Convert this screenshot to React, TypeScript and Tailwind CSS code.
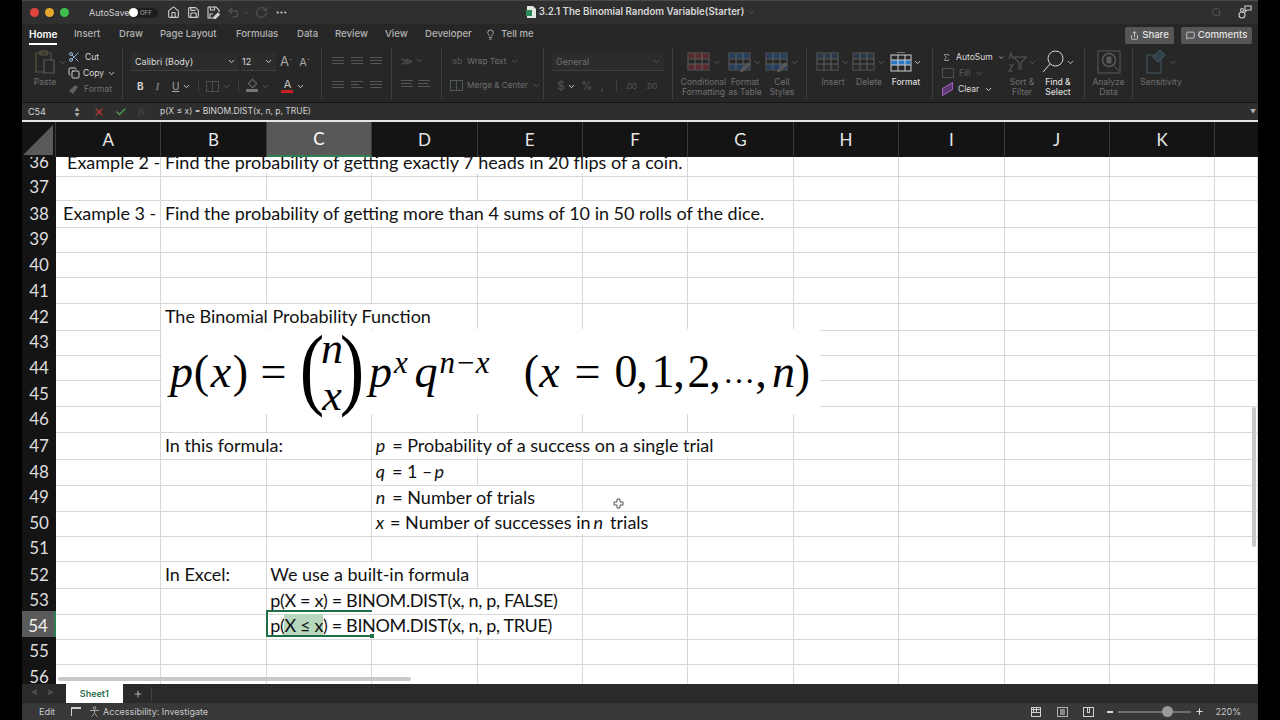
import type { ReactNode } from "react";
import {
  Check,
  ChevronDown,
  Copy,
  Home,
  Lightbulb,
  MessageSquare,
  MoreHorizontal,
  Plus,
  RotateCw,
  Save,
  Scissors,
  Search,
  Share,
  Sigma,
  Undo2,
  X,
} from "lucide-react";

const spanClass: Record<number, string> = {
  1: "col-span-1",
  2: "col-span-2",
  3: "col-span-3",
  4: "col-span-4",
  5: "col-span-5",
  6: "col-span-6",
};

type Cell = { col: number; span: number; body: ReactNode; indent?: string };

const columns = ["A", "B", "C", "D", "E", "F", "G", "H", "I", "J", "K"];

const sheetRows: { n: number; cells: Cell[] }[] = [
  {
    n: 36,
    cells: [
      { col: 0, span: 1, body: "Example 2 -", indent: "pl-[11px]" },
      { col: 1, span: 5, body: "Find the probability of getting exactly 7 heads in 20 flips of a coin." },
    ],
  },
  { n: 37, cells: [] },
  {
    n: 38,
    cells: [
      { col: 0, span: 1, body: "Example 3 -", indent: "pl-[7px]" },
      { col: 1, span: 6, body: "Find the probability of getting more than 4 sums of 10 in 50 rolls of the dice." },
    ],
  },
  { n: 39, cells: [] },
  { n: 40, cells: [] },
  { n: 41, cells: [] },
  { n: 42, cells: [{ col: 1, span: 3, body: "The Binomial Probability Function" }] },
  { n: 43, cells: [] },
  { n: 44, cells: [] },
  { n: 45, cells: [] },
  { n: 46, cells: [] },
  {
    n: 47,
    cells: [
      { col: 1, span: 2, body: "In this formula:" },
      { col: 3, span: 4, body: <><i className="mr-[7px]">p</i>= Probability of a success on a single trial</> },
    ],
  },
  { n: 48, cells: [{ col: 3, span: 1, body: <><i className="mr-[7px]">q</i>= 1 – <i className="ml-[2px]">p</i></> }] },
  { n: 49, cells: [{ col: 3, span: 2, body: <><i className="mr-[7px]">n</i>= Number of trials</> }] },
  {
    n: 50,
    cells: [
      {
        col: 3,
        span: 3,
        body: <><i className="mr-[6px]">x</i>= Number of successes in <i className="mr-[7px] ml-[3px]">n</i> trials</>,
      },
    ],
  },
  { n: 51, cells: [] },
  {
    n: 52,
    cells: [
      { col: 1, span: 1, body: "In Excel:" },
      { col: 2, span: 2, body: "We use a built-in formula" },
    ],
  },
  { n: 53, cells: [{ col: 2, span: 3, body: <span className="tracking-[-0.35px]">p(X = x) = BINOM.DIST(x, n, p, FALSE)</span> }] },
  {
    n: 54,
    cells: [
      {
        col: 2,
        span: 3,
        body: (
          <span className="tracking-[-0.35px]">
            p(<span className="inline-block bg-[#b6d7bd] leading-[23px]">X ≤ x</span>) = BINOM.DIST(x, n, p, TRUE)
          </span>
        ),
      },
    ],
  },
  { n: 55, cells: [] },
  { n: 56, cells: [] },
];

function Chev({ dim = false }: { dim?: boolean }) {
  return <ChevronDown size={9} strokeWidth={2.4} className={dim ? "text-[#5c5c5c]" : "text-[#d8d8d8]"} />;
}

function SheetRow({ n, cells }: { n: number; cells: Cell[] }) {
  const out: ReactNode[] = [];
  let col = 0;
  while (col < 12) {
    const cell = cells.find((c) => c.col === col);
    if (cell) {
      out.push(
        <div
          key={col}
          className={`${spanClass[cell.span]} relative flex items-center whitespace-nowrap border-r border-b border-[#d8d8d8] pt-[1px] ${cell.indent ?? "pl-[3.5px]"}`}
        >
          {cell.body}
          {n === 54 && (
            <div className="absolute top-[-1px] left-[-1px] h-[27px] w-[106.5px] border-2 border-r-0 border-[#1f6e46]">
              <div className="absolute right-[-2px] bottom-[-3px] h-[4px] w-[4px] bg-[#1f6e46]" />
            </div>
          )}
        </div>
      );
      col += cell.span;
    } else {
      out.push(<div key={col} className="border-r border-b border-[#d8d8d8]" />);
      col += 1;
    }
  }
  return (
    <div className="grid h-[25.78px] shrink-0 grid-cols-[34px_repeat(11,105.4px)_1fr]">
      <div
        className={`flex items-center justify-center border-b border-[#3a3a3a] pt-[1px] text-[17px] ${n === 54 ? "border-r-2 border-r-[#2f7d55] bg-[#5a5a5a] text-[#f2f2f2]" : "bg-[#141414] text-[#dedede]"}`}
      >
        {n}
      </div>
      {out}
    </div>
  );
}

function Glyph({ w, children }: { w: string; children: ReactNode }) {
  return <span className={`flex ${w} shrink-0 justify-center`}>{children}</span>;
}

function Formula() {
  return (
    <div className="absolute top-[172px] left-[140px] flex h-[85px] w-[658px] items-center whitespace-nowrap bg-white pl-[6px] font-['Liberation_Serif',serif] text-[46px] leading-none text-black">
      <Glyph w="w-[27px]"><i>p</i></Glyph>
      <Glyph w="w-[13px]">(</Glyph>
      <Glyph w="w-[26px]"><i>x</i></Glyph>
      <Glyph w="w-[13px]">)</Glyph>
      <Glyph w="w-[25px] ml-[14px]">=</Glyph>
      <span className="ml-[16px] flex w-[20px] shrink-0 -translate-y-[5px] scale-x-[0.8] justify-center text-[92px] font-light">(</span>
      <div className="flex w-[20px] shrink-0 flex-col items-center gap-[14px] text-[44px] italic leading-[33px]">
        <span>n</span>
        <span>x</span>
      </div>
      <span className="flex w-[20px] shrink-0 -translate-y-[5px] scale-x-[0.8] justify-center text-[92px] font-light">)</span>
      <Glyph w="w-[25px] ml-[6px]"><i>p</i></Glyph>
      <Glyph w="w-[16px] mb-[18px] text-[31px]"><i>x</i></Glyph>
      <Glyph w="w-[22px] ml-[6px]"><i>q</i></Glyph>
      <Glyph w="w-[55px] mb-[18px] text-[31px]"><i>n−x</i></Glyph>
      <Glyph w="w-[13px] ml-[33px]">(</Glyph>
      <Glyph w="w-[23px]"><i>x</i></Glyph>
      <Glyph w="w-[27px] ml-[13px]">=</Glyph>
      <Glyph w="w-[22px] ml-[14px]">0</Glyph>
      <Glyph w="w-[10px]">,</Glyph>
      <Glyph w="w-[22px] ml-[5px]">1</Glyph>
      <Glyph w="w-[10px]">,</Glyph>
      <Glyph w="w-[22px] ml-[4px]">2</Glyph>
      <Glyph w="w-[10px]">,</Glyph>
      <Glyph w="w-[30px] ml-[4px] text-[32px]">…</Glyph>
      <Glyph w="w-[10px] ml-[2px]">,</Glyph>
      <Glyph w="w-[25px] ml-[5px]"><i>n</i></Glyph>
      <Glyph w="w-[13px]">)</Glyph>
    </div>
  );
}

function Sep() {
  return <div className="my-[3px] w-px shrink-0 bg-[#3d3d3d]" />;
}

function BigButton({ w, icon, label, dim = true }: { w: string; icon: ReactNode; label: ReactNode; dim?: boolean }) {
  return (
    <div className={`flex ${w} shrink-0 flex-col items-center`}>
      <div className="flex h-[28px] items-center gap-[1px]">{icon}</div>
      <div className={`mt-[2px] text-center text-[8.5px] leading-[9.5px] ${dim ? "text-[#707070]" : "font-medium text-[#dcdcdc]"}`}>
        {label}
      </div>
    </div>
  );
}

function GridIcon({ top, bottom, slant = false }: { top: string; bottom: string; slant?: boolean }) {
  return (
    <svg width="24" height="20" viewBox="0 0 24 20" fill="none" stroke="#5e5e5e" strokeWidth="1">
      <rect x="1" y="1" width="21" height="17" />
      <rect x="1.5" y="1.5" width="20" height="5" fill={top} stroke="none" />
      <rect x="1.5" y="12" width="20" height="5.5" fill={bottom} stroke="none" />
      <path d="M1 7h21M1 12h21M8 1v17M15 1v17" />
      {slant && <path d="M12 19l8-8 2 2-8 7z" fill="#555" />}
    </svg>
  );
}

function AlignLines({ w }: { w: number }) {
  return (
    <div className="flex flex-col gap-[2px]">
      <div className="h-px w-[12px] bg-[#565656]" />
      <div className="h-px bg-[#565656]" style={{ width: w }} />
      <div className="h-px w-[12px] bg-[#565656]" />
    </div>
  );
}

function Ribbon() {
  return (
    <div className="flex h-[57px] shrink-0 bg-[#272727] text-[8.5px] text-[#dcdcdc]">
      {/* clipboard */}
      <div className="flex w-[100px] shrink-0 pl-[10px]">
        <BigButton
          w="w-[26px] pt-[3px]"
          label="Paste"
          icon={
            <svg width="24" height="26" viewBox="0 0 24 26" fill="none" stroke="#5d5442" strokeWidth="1.2">
              <path d="M3 4h15v19H3z" />
              <path d="M7 2h7v4H7z" />
              <path d="M11 11h10v13H11z" fill="#272727" stroke="#5a5a5a" />
            </svg>
          }
        />
        <div className="pt-[13px]">
          <Chev dim />
        </div>
        <div className="ml-[1px] flex flex-col gap-[4px] pt-[6px]">
          <div className="flex h-[12px] items-center gap-[5px]">
            <Scissors size={12} className="text-[#8fb4dc]" />
            <span>Cut</span>
          </div>
          <div className="flex h-[12px] items-center gap-[3px]">
            <Copy size={12} className="text-[#cfcfcf]" />
            <span>Copy</span>
            <Chev />
          </div>
          <div className="flex h-[12px] items-center gap-[4px] text-[#707070]">
            <svg width="12" height="12" viewBox="0 0 12 12" fill="#5e5e5e">
              <path d="M1 8l6-6 3 2-5 7z" />
            </svg>
            <span>Format</span>
          </div>
        </div>
      </div>
      <Sep />
      {/* font */}
      <div className="flex w-[198px] shrink-0 flex-col pt-[8px] pl-[8px]">
        <div className="flex h-[18px] items-center">
          <div className="flex h-[18px] w-[108px] items-center justify-between border-b border-[#3e3e3e] bg-[#2c2c2c] pr-[3px] pl-[4px] text-[9px]">
            <span>Calibri (Body)</span>
            <Chev />
          </div>
          <div className="ml-[2px] flex h-[18px] w-[35px] items-center justify-between border-b border-[#3e3e3e] bg-[#2c2c2c] pr-[3px] pl-[1px] text-[9px]">
            <span>12</span>
            <Chev />
          </div>
          <span className="ml-[4px] text-[13px] text-[#a8a8a8]">A</span>
          <span className="text-[8px] text-[#8a8a8a]">ˆ</span>
          <span className="ml-[7px] text-[11px] text-[#a8a8a8]">A</span>
          <span className="text-[8px] text-[#8a8a8a]">ˇ</span>
        </div>
        <div className="mt-[6px] flex h-[18px] items-center text-[10px]">
          <span className="ml-[6px] font-bold text-[#cfcfcf]">B</span>
          <span className="ml-[12px] font-['Liberation_Serif',serif] text-[#a0a0a0] italic">I</span>
          <span className="ml-[13px] text-[#a8a8a8] underline">U</span>
          <span className="ml-[3px]">
            <Chev />
          </span>
          <div className="mx-[7px] h-[12px] w-px bg-[#3d3d3d]" />
          <div className="grid h-[11px] w-[13px] grid-cols-2 border border-[#4d4d4d]">
            <div className="border-r border-[#4d4d4d]" />
          </div>
          <span className="ml-[3px]">
            <Chev dim />
          </span>
          <div className="mx-[7px] h-[12px] w-px bg-[#3d3d3d]" />
          <div className="flex w-[12px] flex-col items-center">
            <div className="h-[7px] w-[7px] rotate-45 border border-[#6a6a6a]" />
            <div className="mt-[2px] h-[3px] w-[12px] bg-[#777]" />
          </div>
          <span className="ml-[3px]">
            <Chev dim />
          </span>
          <div className="ml-[11px] flex w-[12px] flex-col items-center text-[11px] leading-[10px] text-[#c8c8c8]">
            A<div className="mt-[1px] h-[3px] w-[12px] bg-[#c81e28]" />
          </div>
          <span className="ml-[3px]">
            <Chev />
          </span>
        </div>
      </div>
      <Sep />
      {/* alignment */}
      <div className="flex w-[69px] shrink-0 flex-col gap-[17px] pt-[12px] pl-[10px]">
        <div className="flex items-center gap-[7px]">
          <AlignLines w={12} />
          <AlignLines w={12} />
          <AlignLines w={12} />
        </div>
        <div className="flex items-center gap-[7px]">
          <AlignLines w={12} />
          <AlignLines w={8} />
          <AlignLines w={12} />
        </div>
      </div>
      <Sep />
      <div className="flex w-[49px] shrink-0 flex-col gap-[15px] pt-[11px] pl-[9px]">
        <div className="flex h-[9px] items-center gap-[2px]">
          <span className="text-[11px] leading-[10px] text-[#555]">≫</span>
          <Chev dim />
        </div>
        <div className="flex items-center gap-[5px]">
          <AlignLines w={10} />
          <AlignLines w={10} />
        </div>
      </div>
      <Sep />
      {/* wrap / merge */}
      <div className="flex w-[101px] shrink-0 flex-col gap-[10px] pt-[9px] pl-[8px] text-[8.2px] whitespace-nowrap text-[#707070]">
        <div className="flex h-[14px] items-center gap-[4px]">
          <span className="w-[13px] pl-[2px] text-[9px] text-[#555]">ab</span>
          <span>Wrap Text</span>
          <Chev dim />
        </div>
        <div className="flex h-[14px] items-center gap-[4px]">
          <div className="grid h-[11px] w-[13px] grid-cols-2 border border-[#4d5a52]">
            <div className="border-r border-[#4d5a52]" />
          </div>
          <span>Merge &amp; Center</span>
          <Chev dim />
        </div>
      </div>
      <Sep />
      {/* number */}
      <div className="flex w-[128px] shrink-0 flex-col pt-[8px] pl-[8px] text-[#707070]">
        <div className="flex h-[18px] w-[112px] items-center justify-between border-b border-[#3e3e3e] bg-[#2c2c2c] pr-[3px] pl-[4px] text-[9px]">
          <span>General</span>
          <Chev dim />
        </div>
        <div className="mt-[6px] flex h-[18px] items-center pl-[5px] text-[12px] text-[#565656]">
          <span>$</span>
          <span className="ml-[2px]">
            <Chev />
          </span>
          <span className="ml-[5px]">%</span>
          <span className="ml-[8px]">,</span>
          <div className="mr-[8px] ml-[12px] h-[12px] w-px bg-[#3d3d3d]" />
          <span className="text-[8px]">.00</span>
          <span className="ml-[8px] text-[8px]">.00</span>
        </div>
      </div>
      <Sep />
      {/* styles */}
      <div className="flex w-[133px] shrink-0 pt-[3px] pl-[7px]">
        <BigButton w="w-[47px]" label={<>Conditional<br />Formatting</>} icon={<><GridIcon top="#5a2a2e" bottom="#5a2a2e" /><Chev dim /></>} />
        <BigButton w="w-[36px]" label={<>Format<br />as Table</>} icon={<><GridIcon top="#273f5e" bottom="#273f5e" slant /><Chev dim /></>} />
        <BigButton w="w-[38px]" label={<>Cell<br />Styles</>} icon={<><GridIcon top="#273f5e" bottom="#273f5e" slant /><Chev dim /></>} />
      </div>
      <Sep />
      {/* cells */}
      <div className="flex w-[125px] shrink-0 pt-[3px] pl-[8px]">
        <BigButton w="w-[36px]" label="Insert" icon={<><GridIcon top="#2b3a4a" bottom="#2b2b2b" /><Chev dim /></>} />
        <BigButton w="w-[36px]" label="Delete" icon={<><GridIcon top="#2b3a4a" bottom="#2b2b2b" /><Chev dim /></>} />
        <BigButton
          w="w-[38px]"
          dim={false}
          label="Format"
          icon={
            <>
              <svg width="22" height="22" viewBox="0 0 22 22" fill="none" stroke="#d0d0d0" strokeWidth="1">
                <rect x="1" y="4" width="20" height="16" />
                <rect x="1.5" y="9" width="19" height="5" fill="#2a78c4" stroke="none" />
                <path d="M1 9h20M1 14h20M8 4v16M15 4v16" />
                <path d="M7 1.5h8" stroke="#777" />
              </svg>
              <Chev />
            </>
          }
        />
      </div>
      <Sep />
      {/* editing */}
      <div className="flex w-[151px] shrink-0 pl-[9px]">
        <div className="flex w-[62px] shrink-0 flex-col gap-[4px] pt-[6px]">
          <div className="flex h-[12px] items-center gap-[5px]">
            <Sigma size={13} className="text-[#b5b5b5]" />
            <span>AutoSum</span>
            <Chev />
          </div>
          <div className="flex h-[12px] items-center gap-[5px] text-[#606060]">
            <div className="h-[10px] w-[12px] border border-[#505050]" />
            <span>Fill</span>
            <Chev dim />
          </div>
          <div className="flex h-[12px] items-center gap-[5px]">
            <div className="h-[8px] w-[11px] -skew-y-[30deg] border border-[#a35fc2] bg-[#5e3a70]" />
            <span>Clear</span>
            <Chev />
          </div>
        </div>
        <div className="flex pt-[3px]">
          <BigButton
            w="w-[36px]"
            label={<>Sort &amp;<br />Filter</>}
            icon={
              <>
                <svg width="20" height="22" viewBox="0 0 20 22" fill="none" stroke="#555" strokeWidth="1.1">
                  <path d="M7 6h12l-5 6v6h-2v-6z" />
                  <path d="M2 8l2-6 2 6M2 14h4l-4 6h4" />
                </svg>
                <Chev dim />
              </>
            }
          />
          <BigButton
            w="w-[36px]"
            dim={false}
            label={<>Find &amp;<br />Select</>}
            icon={
              <>
                <svg width="24" height="26" viewBox="0 0 24 26" fill="none" stroke="#dcdcdc" strokeWidth="1">
                  <circle cx="14.5" cy="9.5" r="7.5" />
                  <path d="M9 15L2 23" />
                </svg>
                <Chev />
              </>
            }
          />
        </div>
      </div>
      <Sep />
      <div className="flex w-[47px] shrink-0 justify-center pt-[3px]">
        <BigButton
          w="w-[46px]"
          label={<>Analyze<br />Data</>}
          icon={
            <svg width="26" height="26" viewBox="0 0 26 26" fill="none" stroke="#5a5a5a" strokeWidth="1">
              <rect x="2" y="2" width="22" height="22" />
              <circle cx="13" cy="11" r="6.5" strokeWidth="1.5" />
              <path d="M11 8h4v6h-4zM17 16l6 6" fill="#5a5a5a" />
            </svg>
          }
        />
      </div>
      <Sep />
      <div className="flex w-[56px] shrink-0 justify-center pt-[3px]">
        <BigButton
          w="w-[56px]"
          label="Sensitivity"
          icon={
            <>
              <svg width="22" height="26" viewBox="0 0 22 26" fill="none" stroke="#3c5058" strokeWidth="1.2">
                <rect x="2" y="6" width="14" height="18" />
                <path d="M8 8l7-7 5 5-7 7z" fill="#2e4048" />
              </svg>
              <Chev dim />
            </>
          }
        />
      </div>
    </div>
  );
}

export default function App() {
  const tabs = [
    ["Insert", "w-[45px]"],
    ["Draw", "w-[41px]"],
    ["Page Layout", "w-[76px]"],
    ["Formulas", "w-[61px]"],
    ["Data", "w-[38px]"],
    ["Review", "w-[50px]"],
    ["View", "w-[40px]"],
    ["Developer", "w-[59px]"],
  ];
  return (
    <div className="flex h-[720px] w-[1280px] overflow-hidden bg-black font-['Inter',sans-serif]">
      <div className="w-[22px] shrink-0" />
      <div className="flex w-[1236px] shrink-0 flex-col">
        {/* title bar */}
        <div className="flex h-[24px] shrink-0 items-center border-t border-[#4a4a4a] bg-[#2f2f2f] text-[9px] text-[#d0d0d0]">
          <div className="flex flex-1 items-center pl-[8px]">
            <div className="h-[9px] w-[9px] rounded-full bg-[#e0443e]" />
            <div className="ml-[6px] h-[9px] w-[9px] rounded-full bg-[#e5a82e]" />
            <div className="ml-[6px] h-[9px] w-[9px] rounded-full bg-[#3fc04c]" />
            <span className="ml-[20px] w-[40px]">AutoSave</span>
            <div className="flex h-[10px] w-[29px] items-center gap-[2px] rounded-full bg-[#1d1d1d]">
              <div className="h-[9px] w-[9px] rounded-full bg-white" />
              <span className="text-[6px] text-[#aaa]">OFF</span>
            </div>
            <Home size={13} className="ml-[9px] text-[#cfcfcf]" />
            <Save size={13} className="ml-[7px] text-[#cfcfcf]" />
            <svg width="13" height="13" viewBox="0 0 13 13" fill="none" stroke="#cfcfcf" strokeWidth="1.1" className="ml-[7px]">
              <path d="M1 1h8l3 3v2M8 12H1V1M3.5 1v3h4V1M3 12V8h3" />
              <path d="M7 11l4-4 1.5 1.5-4 4H7z" fill="#cfcfcf" />
            </svg>
            <Undo2 size={13} className="ml-[7px] text-[#555]" />
            <ChevronDown size={8} className="ml-[2px] text-[#555]" />
            <RotateCw size={13} className="ml-[5px] text-[#555]" />
            <MoreHorizontal size={13} className="ml-[7px] text-[#cfcfcf]" />
          </div>
          <div className="flex items-center gap-[3px] text-[9.7px] font-semibold text-[#d8d8d8]">
            <svg width="10" height="12" viewBox="0 0 10 12">
              <path d="M1 0h6l3 3v9H1z" fill="#dfe7e2" />
              <rect x="0" y="4" width="6" height="6" fill="#2d8a5a" />
            </svg>
            <span>3.2.1 The Binomial Random Variable(Starter)</span>
            <ChevronDown size={9} className="text-[#666]" />
          </div>
          <div className="flex flex-1 items-center justify-end pr-[6px]">
            <Search size={11} className="text-[#555]" />
            <svg width="15" height="15" viewBox="0 0 15 15" fill="none" stroke="#cfcfcf" strokeWidth="1.1" className="ml-[15px]">
              <circle cx="5" cy="10" r="3" />
              <path d="M8 1h6v4h-4l-2 2z" />
              <circle cx="5" cy="5" r="1.5" />
            </svg>
          </div>
        </div>
        {/* tabs */}
        <div className="flex h-[21px] shrink-0 items-center bg-[#272727] pl-[7px] text-[9.6px] font-medium text-[#b4b4b4]">
          <div className="flex h-[21px] w-[45px] shrink-0 flex-col items-start justify-center">
            <div className="relative text-[10px] font-semibold text-white">
              Home
              <div className="absolute right-0 bottom-[-3px] left-0 h-[2px] bg-white" />
            </div>
          </div>
          {tabs.map(([t, w]) => (
            <span key={t} className={`${w} shrink-0`}>
              {t}
            </span>
          ))}
          <Lightbulb size={11} className="ml-[1px]" />
          <span className="ml-[5px]">Tell me</span>
          <div className="ml-auto flex items-center gap-[7px] pt-[2px] pr-[6px]">
            <div className="flex h-[17px] w-[49px] items-center justify-center gap-[3px] rounded-[2px] bg-[#565656] text-[#e4e4e4]">
              <Share size={9} />
              <span>Share</span>
            </div>
            <div className="flex h-[17px] w-[71px] items-center justify-center gap-[3px] rounded-[2px] bg-[#565656] text-[#e4e4e4]">
              <MessageSquare size={9} />
              <span>Comments</span>
            </div>
          </div>
        </div>
        <Ribbon />
        {/* formula bar */}
        <div className="flex h-[18px] shrink-0 items-center border-t border-[#151515] bg-[#2e2e2e] text-[8.5px] text-[#d4d4d4]">
          <span className="w-[50px] pl-[6px] text-[9px]">C54</span>
          <div className="flex w-[10px] flex-col items-center text-[5px] leading-[6px] text-[#aaa]">
            <span>▲</span>
            <span>▼</span>
          </div>
          <X size={12} strokeWidth={3} className="ml-[11px] text-[#a83a3a]" />
          <Check size={12} strokeWidth={3} className="ml-[10px] text-[#4a9a4a]" />
          <span className="ml-[11px] w-[12px] font-['Liberation_Serif',serif] text-[10px] text-[#4a4a4a] italic">fx</span>
          <span className="ml-[10px]">p(X ≤ x) = BINOM.DIST(x, n, p, TRUE)</span>
          <span className="mr-[2px] ml-auto text-[6px] text-[#b0b0b0]">▼</span>
        </div>
        <div className="h-[2px] shrink-0 bg-[#e4e4e4]" />
        {/* column headers */}
        <div className="grid h-[35px] shrink-0 grid-cols-[34px_repeat(11,105.4px)_1fr] bg-[#141414] font-['Lato',sans-serif] text-[17px] text-[#e6e6e6]">
          <div className="flex items-end justify-end border-r border-[#3a3a3a] p-[2px]">
            <div className="h-0 w-0 border-b-[30px] border-l-[30px] border-b-[#5a5a5a] border-l-transparent" />
          </div>
          {columns.map((c) => (
            <div
              key={c}
              className={`flex items-center justify-center border-r border-[#3a3a3a] ${c === "C" ? "border-b-2 border-b-[#2f7d55] bg-[#585858] text-white" : ""}`}
            >
              {c}
            </div>
          ))}
          <div />
        </div>
        {/* sheet */}
        <div className="relative h-[527px] shrink-0 overflow-hidden bg-white font-['Lato',sans-serif] text-[18px] text-[#111]">
          <div className="mt-[-9.3px] flex flex-col">
            {sheetRows.map((r) => (
              <SheetRow key={r.n} n={r.n} cells={r.cells} />
            ))}
          </div>
          <Formula />
          {/* cursor */}
          <svg width="11" height="11" viewBox="0 0 11 11" fill="white" stroke="#555" strokeWidth="1" className="absolute top-[341px] left-[591px]">
            <path d="M4 1h3v3h3v3H7v3H4V7H1V4h3z" />
          </svg>
          <div className="absolute top-[520px] left-[36px] h-[4px] w-[353px] rounded-full bg-[#c8c8c8]" />
          <div className="absolute top-[250px] left-[1230px] h-[140px] w-[4px] rounded-full bg-[#c8c8c8]" />
        </div>
        {/* sheet tabs */}
        <div className="flex h-[19px] shrink-0 items-center bg-[#2a2a2a] text-[9px]">
          <span className="ml-[9px] text-[7px] text-[#4c4c4c]">◀</span>
          <span className="ml-[10px] text-[7px] text-[#4c4c4c]">▶</span>
          <div className="ml-[12px] flex h-[19px] w-[57px] items-center justify-center bg-white font-semibold text-[#2c6e4c]">Sheet1</div>
          <Plus size={10} strokeWidth={2.5} className="ml-[10px] text-[#b0b0b0]" />
          <div className="ml-[8px] h-[14px] w-px bg-[#444]" />
        </div>
        {/* status bar */}
        <div className="flex h-[17px] shrink-0 items-center bg-[#383838] text-[9px] text-[#c8c8c8]">
          <span className="ml-[17px]">Edit</span>
          <div className="ml-[16px] h-[9px] w-[10px] border-t-2 border-l border-[#d0d0d0]" />
          <svg width="11" height="11" viewBox="0 0 11 11" fill="none" stroke="#b0b0b0" strokeWidth="0.9" className="ml-[8px]">
            <circle cx="5.5" cy="2" r="1.3" />
            <path d="M1 4.5h9M5.5 4.5v3M5.5 7.5L2.5 10.5M5.5 7.5l3 3" />
          </svg>
          <span className="ml-[3px]">Accessibility: Investigate</span>
          <div className="ml-auto flex items-center pr-[17px]">
            <div className="grid h-[10px] w-[10px] grid-cols-3 grid-rows-3 border border-[#d0d0d0]">
              <div className="border-r border-b border-[#d0d0d0]" />
              <div className="border-r border-b border-[#d0d0d0]" />
              <div className="border-b border-[#d0d0d0]" />
              <div className="border-r border-b border-[#d0d0d0]" />
              <div className="border-r border-b border-[#d0d0d0]" />
              <div className="border-b border-[#d0d0d0]" />
            </div>
            <div className="ml-[16px] flex h-[10px] w-[11px] items-center justify-center border border-[#b0b0b0]">
              <div className="h-[6px] w-[5px] bg-[#888]" />
            </div>
            <div className="ml-[15px] h-[10px] w-[11px] border border-[#d0d0d0]">
              <div className="ml-[3px] h-[5px] w-[3px] border-r border-b border-l border-[#d0d0d0]" />
            </div>
            <div className="ml-[13px] h-[2px] w-[6px] bg-[#dcdcdc]" />
            <div className="relative ml-[5px] flex h-[2px] w-[73px] bg-[#6e6e6e]">
              <div className="absolute top-[-5px] left-[44px] h-[11px] w-[11px] rounded-full bg-[#9a9a9a]" />
            </div>
            <Plus size={9} strokeWidth={3} className="ml-[4px] text-[#dcdcdc]" />
            <span className="ml-[12px]">220%</span>
          </div>
        </div>
      </div>
      <div className="flex-1" />
    </div>
  );
}
